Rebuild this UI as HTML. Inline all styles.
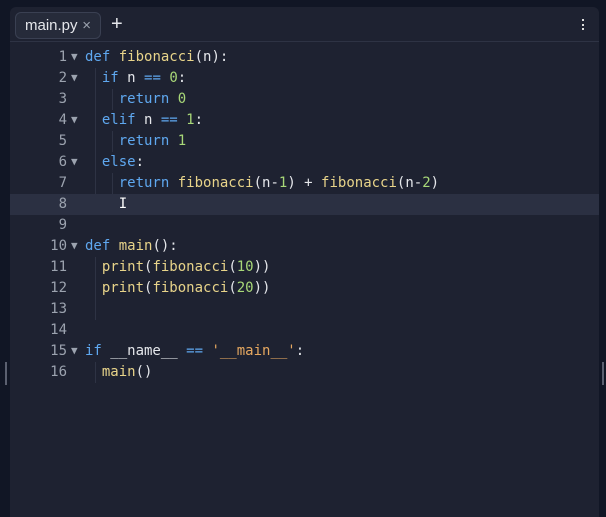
<!DOCTYPE html>
<html><head><style>
*{margin:0;padding:0;box-sizing:border-box}
body{width:606px;height:510px;background:#111625;overflow:hidden;position:relative;font-family:"DejaVu Sans Mono","Liberation Mono",monospace}
.panel{position:absolute;left:10px;top:7px;width:589px;height:510px;background:#1e2231;border-radius:6px 6px 0 0}
.tabbar{position:absolute;left:0;top:0;width:100%;height:35px;border-bottom:1px solid #2e3344}
.tab{position:absolute;left:5px;top:5px;width:86px;height:27px;border:1px solid #3a4052;border-radius:6px;background:#262b3a;color:#e5e7eb;font-family:"Liberation Sans",sans-serif;font-size:15px;line-height:25px;padding-left:9px}
.tab .x{position:absolute;right:9px;top:0;color:#9ca3af;font-size:15px}
.plus{position:absolute;left:101px;top:5px;color:#e5e7eb;font-family:"Liberation Sans",sans-serif;font-size:20px;line-height:24px}
.dots{position:absolute;left:572px;top:12px;width:2px}
.dots i{display:block;width:2px;height:2px;background:#ddd;margin-bottom:2.5px}
.code{position:absolute;left:0;top:40px;width:100%;font-size:14px}
.ln{height:21px;line-height:21px;position:relative;white-space:pre;color:#e5e7eb}
.ln.hl{background:#2b3042}
.num{position:absolute;left:0;width:57px;text-align:right;color:#9ca3af}
.tri{position:absolute;left:61px;top:0;height:21px;line-height:20px;color:#9ca3af;font-size:11px}
.txt{position:absolute;left:75px}
.k{color:#5fa8f0}.f{color:#e8d48a}.n{color:#a8d878}.s{color:#e6a860}
.g{position:absolute;width:1px;background:#2e3344}
</style></head><body>
<div style="position:absolute;left:5px;top:362px;width:2px;height:23px;background:#5b6070"></div>
<div style="position:absolute;left:602px;top:362px;width:2px;height:23px;background:#5b6070"></div>
<div class="panel">
<div class="tabbar">
<div class="tab">main.py<span class="x">×</span></div>
<div class="plus">+</div>
<div class="dots"><i></i><i></i><i></i></div>
</div>
<div class="g" style="left:85px;top:61px;height:147px"></div>
<div class="g" style="left:102px;top:82px;height:21px"></div>
<div class="g" style="left:102px;top:124px;height:21px"></div>
<div class="g" style="left:102px;top:166px;height:21px"></div>
<div class="g" style="left:85px;top:250px;height:63px"></div>
<div class="g" style="left:85px;top:355px;height:21px"></div>
<div class="code">
<div class="ln"><span class="num">1</span><span class="tri">▼</span><span class="txt"><span class="k">def</span> <span class="f">fibonacci</span>(n):</span></div>
<div class="ln"><span class="num">2</span><span class="tri">▼</span><span class="txt">  <span class="k">if</span> n <span class="k">==</span> <span class="n">0</span>:</span></div>
<div class="ln"><span class="num">3</span><span class="txt">    <span class="k">return</span> <span class="n">0</span></span></div>
<div class="ln"><span class="num">4</span><span class="tri">▼</span><span class="txt">  <span class="k">elif</span> n <span class="k">==</span> <span class="n">1</span>:</span></div>
<div class="ln"><span class="num">5</span><span class="txt">    <span class="k">return</span> <span class="n">1</span></span></div>
<div class="ln"><span class="num">6</span><span class="tri">▼</span><span class="txt">  <span class="k">else</span>:</span></div>
<div class="ln"><span class="num">7</span><span class="txt">    <span class="k">return</span> <span class="f">fibonacci</span>(n-<span class="n">1</span>) + <span class="f">fibonacci</span>(n-<span class="n">2</span>)</span></div>
<div class="ln hl"><span class="num">8</span><span class="txt">    <span style="color:#fff">I</span></span></div>
<div class="ln"><span class="num">9</span></div>
<div class="ln"><span class="num">10</span><span class="tri">▼</span><span class="txt"><span class="k">def</span> <span class="f">main</span>():</span></div>
<div class="ln"><span class="num">11</span><span class="txt">  <span class="f">print</span>(<span class="f">fibonacci</span>(<span class="n">10</span>))</span></div>
<div class="ln"><span class="num">12</span><span class="txt">  <span class="f">print</span>(<span class="f">fibonacci</span>(<span class="n">20</span>))</span></div>
<div class="ln"><span class="num">13</span></div>
<div class="ln"><span class="num">14</span></div>
<div class="ln"><span class="num">15</span><span class="tri">▼</span><span class="txt"><span class="k">if</span> __name__ <span class="k">==</span> <span class="s">'__main__'</span>:</span></div>
<div class="ln"><span class="num">16</span><span class="txt">  <span class="f">main</span>()</span></div>
</div>
</div>
</body></html>
